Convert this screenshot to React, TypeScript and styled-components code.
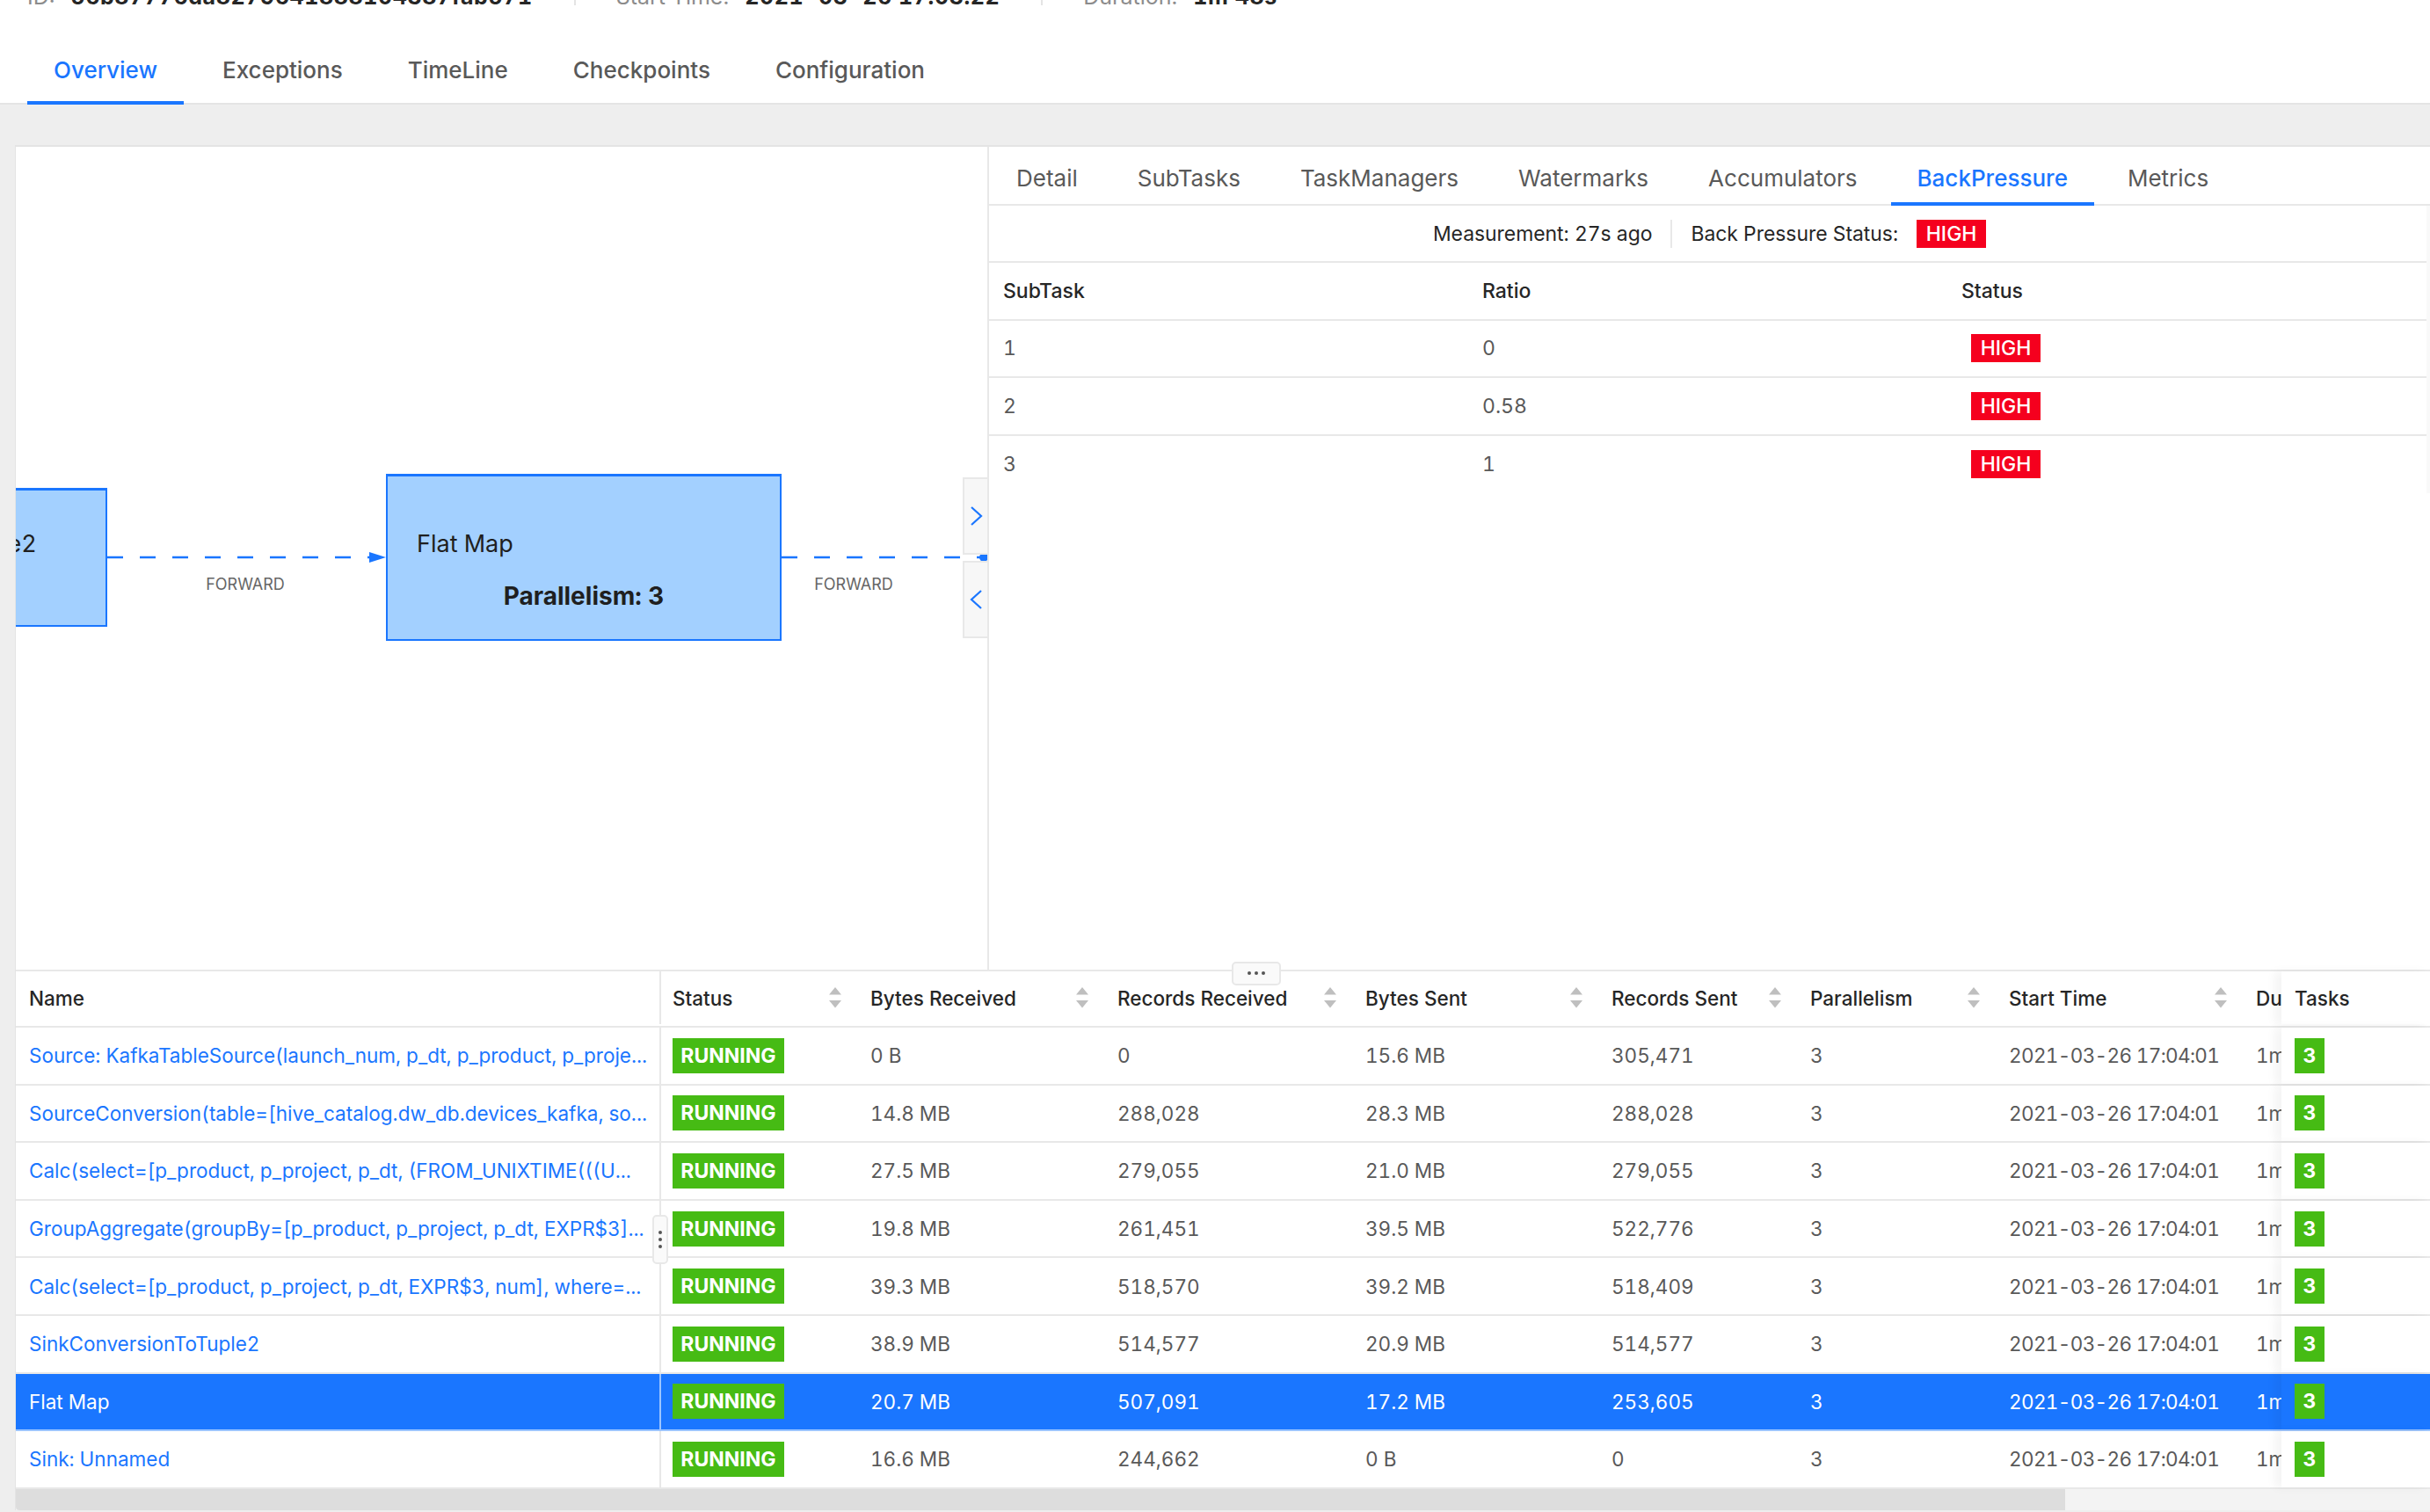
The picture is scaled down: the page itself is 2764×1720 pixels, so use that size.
import React from "react";
import styled, { createGlobalStyle } from "styled-components";

const Global = createGlobalStyle`
  html, body { margin: 0; padding: 0; background: #eeeeee; }
  * { box-sizing: border-box; }
  body {
    font-family: Inter, "Liberation Sans", sans-serif;
    font-feature-settings: "tnum";
    color: #595959;
  }
`;

const Page = styled.div`
  width: 2764px;
  height: 1720px;
  overflow: hidden;
  background: #eeeeee;
`;

const Header = styled.header`
  display: flow-root;
  height: 119px;
  background: #fff;
  border-bottom: 2px solid #e4e4e4;
`;

const Meta = styled.div`
  display: flex;
  align-items: flex-end;
  height: 20px;
  margin-top: -14px;
  padding-left: 31px;
  font-size: 25px;
  line-height: 20px;
  color: #8c8c8c;
`;

const MetaItem = styled.div`
  display: flex;
  gap: 18px;
  padding-right: 47px;
  margin-right: 46px;
  border-right: 2px solid #e4e4e4;
  &:last-child { border-right: 0; }
  b { color: #262626; font-weight: 700; font-size: 25px; letter-spacing: 0.6px; }
`;

const MainTabs = styled.nav`
  display: flex;
  gap: 14px;
  height: 87px;
  margin-top: 26px;
  padding-left: 31px;
`;

const MainTab = styled.div<{ $active?: boolean }>`
  padding: 31px 30px 0;
  font-size: 26px;
  line-height: 34px;
  font-weight: 500;
  color: ${(p) => (p.$active ? "#1a76ff" : "#595959")};
  border-bottom: 4px solid ${(p) => (p.$active ? "#1a76ff" : "transparent")};
`;

const Card = styled.main`
  position: relative;
  margin: 46px 0 0 17px;
  background: #fff;
  border-top: 2px solid #e4e4e4;
  border-left: 1px solid #e4e4e4;
`;

const TopArea = styled.section`
  display: flex;
  height: 936px;
`;

const Canvas = styled.div`
  position: relative;
  width: 1107px;
  flex: none;
  overflow: hidden;
  border-right: 2px solid #e8e8e8;
`;

const Edges = styled.svg`
  position: absolute;
  left: 0;
  top: 0;
`;

const Node = styled.div<{ $x: number; $y: number; $w: number; $h: number }>`
  position: absolute;
  left: ${(p) => p.$x}px;
  top: ${(p) => p.$y}px;
  width: ${(p) => p.$w}px;
  height: ${(p) => p.$h}px;
  background: #a3d0ff;
  border: 2px solid #1a76ff;
  border-top-width: 3px;
  color: #1f1f1f;
`;

const NodeName = styled.div<{ $top: number }>`
  position: absolute;
  left: 33px;
  top: ${(p) => p.$top}px;
  font-size: 27px;
  line-height: 36px;
  white-space: nowrap;
`;

const NodeParallel = styled.div`
  position: absolute;
  left: 0;
  right: 0;
  top: 118px;
  text-align: center;
  font-size: 28px;
  line-height: 36px;
  font-weight: 700;
`;

const EdgeLabel = styled.div<{ $cx: number }>`
  position: absolute;
  left: ${(p) => p.$cx - 60}px;
  top: 486px;
  width: 120px;
  text-align: center;
  font-size: 18px;
  line-height: 24px;
  color: #666;
`;

const ZoomGroup = styled.div`
  position: absolute;
  right: -2px;
  top: 376px;
  display: flex;
  flex-direction: column;
  gap: 7px;
`;

const ZoomButton = styled.div`
  display: flex;
  align-items: center;
  justify-content: center;
  width: 30px;
  height: 88px;
  background: #f7f7f7;
  border: 2px solid #e8e8e8;
  border-right: 0;
`;

const Detail = styled.section`
  flex: 1;
  min-width: 0;
`;

const SubTabs = styled.nav`
  display: flex;
  gap: 8px;
  height: 67px;
  padding-left: 1px;
  border-bottom: 2px solid #e8e8e8;
`;

const SubTab = styled.div<{ $active?: boolean }>`
  padding: 19px 30px 0;
  height: 67px;
  font-size: 26px;
  line-height: 34px;
  color: ${(p) => (p.$active ? "#1a76ff" : "#595959")};
  font-weight: ${(p) => (p.$active ? 500 : 400)};
  border-bottom: 4px solid ${(p) => (p.$active ? "#1a76ff" : "transparent")};
`;

const DetailBody = styled.div`
  display: flex;
  align-items: flex-start;
`;

const Scrollbar = styled.div`
  width: 4px;
  height: 327px;
  flex: none;
  background: #f9f9f9;
`;

const DetailContent = styled.div`
  flex: 1;
  min-width: 0;
`;

const Measure = styled.div`
  display: flex;
  align-items: center;
  justify-content: center;
  height: 65px;
  padding-left: 4px;
  font-size: 22.9px;
  color: #262626;
  border-bottom: 2px solid #e8e8e8;
`;

const MeasureText = styled.span`
  padding-right: 21px;
  margin-right: 21px;
  border-right: 2px solid #e8e8e8;
  line-height: 32px;
`;

const Tag = styled.span<{ $tone: "red" | "green"; $w: number }>`
  display: inline-flex;
  align-items: center;
  justify-content: center;
  width: ${(p) => p.$w}px;
  height: ${(p) => (p.$tone === "red" ? 32 : 40)}px;
  padding-top: 1px;
  background: ${(p) => (p.$tone === "red" ? "#f5001e" : "#46bb14")};
  color: #fff;
  font-size: 23px;
  font-weight: ${(p) => (p.$tone === "red" ? 500 : 700)};
  line-height: 1;
`;

const MeasureTag = styled(Tag)`
  margin-left: 21px;
`;

const RatioRow = styled.div<{ $head?: boolean; $last?: boolean }>`
  display: grid;
  grid-template-columns: 545px 545px 1fr;
  align-items: center;
  height: 65.5px;
  border-bottom: ${(p) => (p.$last ? "0" : "2px solid #e8e8e8")};
  font-size: 23px;
  color: ${(p) => (p.$head ? "#262626" : "#595959")};
  font-weight: ${(p) => (p.$head ? 500 : 400)};
  & > div { padding-left: 16px; }
`;

const StatusCell = styled.div`
  && { padding-left: 27px; }
  display: flex;
`;

const TableWrap = styled.section`
  position: relative;
  border-top: 2px solid #e8e8e8;
`;

const Row = styled.div<{ $selected?: boolean }>`
  display: grid;
  grid-template-columns: 734px 223px 281px 282px 280px 226px 226px 281px 44px 1fr;
  height: 65.6px;
  font-size: 22.5px;
  color: ${(p) => (p.$selected ? "#fff" : "#595959")};
  background: ${(p) => (p.$selected ? "#1a76ff" : "#fff")};
  border-bottom: 2px solid ${(p) => (p.$selected ? "#9cc5ff" : "#e8e8e8")};
`;

const HeadRow = styled(Row)`
  height: 64px;
  padding-bottom: 2px;
  color: #262626;
  font-weight: 500;
`;

const Cell = styled.div`
  position: relative;
  display: flex;
  align-items: center;
  justify-content: space-between;
  min-width: 0;
  padding: 0 15px;
  white-space: nowrap;
  overflow: hidden;
`;

const NameCell = styled(Cell)<{ $selected?: boolean }>`
  padding-left: 15px;
  border-right: 2px solid ${(p) => (p.$selected ? "#9cc5ff" : "#e8e8e8")};
  color: ${(p) => (p.$selected ? "#fff" : "#1a76ff")};
`;

const NameHead = styled(Cell)`
  padding-left: 15px;
  border-right: 2px solid #e8e8e8;
`;

const StateCell = styled(Cell)`
  padding-left: 13px;
`;

const DateCell = styled(Cell)`
  letter-spacing: -0.65px;
`;

const ClippedCell = styled(Cell)`
  padding-right: 0;
  justify-content: flex-start;
`;

const TasksCell = styled(Cell)<{ $selected?: boolean }>`
  overflow: visible;
  justify-content: flex-start;
  background: ${(p) => (p.$selected ? "#1a76ff" : "#fff")};
  box-shadow: -8px 0 10px rgba(0, 0, 0, 0.045);
`;

const Caret = styled.svg`
  width: 14px;
  height: 24px;
  flex: none;
  margin-right: 3px;
`;

const HScroll = styled.div`
  height: 24px;
  background: #f3f3f3;
`;

const HThumb = styled.div`
  width: 2331px;
  height: 100%;
  background: #dddddd;
  border-bottom-left-radius: 4px;
`;

const HandleH = styled.div`
  position: absolute;
  left: 1383px;
  top: -11px;
  z-index: 2;
  display: flex;
  align-items: center;
  justify-content: center;
  gap: 4px;
  width: 56px;
  height: 27px;
  padding-bottom: 2px;
  background: #fafafa;
  border: 2px solid #e8e8e8;
  border-radius: 5px;
`;

const HandleV = styled.div`
  position: absolute;
  left: 724px;
  top: 277px;
  z-index: 2;
  display: flex;
  flex-direction: column;
  align-items: center;
  justify-content: center;
  gap: 4px;
  width: 18px;
  height: 56px;
  background: #fafafa;
  border: 2px solid #e8e8e8;
  border-radius: 5px;
`;

const Dot = styled.i`
  display: block;
  width: 4px;
  height: 4px;
  border-radius: 50%;
  background: #555;
`;

const tabs = ["Overview", "Exceptions", "TimeLine", "Checkpoints", "Configuration"];
const subTabs = ["Detail", "SubTasks", "TaskManagers", "Watermarks", "Accumulators", "BackPressure", "Metrics"];
const ratios = [
  { id: 1, ratio: "0" },
  { id: 2, ratio: "0.58" },
  { id: 3, ratio: "1" },
];
const columns = ["Bytes Received", "Records Received", "Bytes Sent", "Records Sent", "Parallelism", "Start Time"];

const vertices = [
  { name: "Source: KafkaTableSource(launch_num, p_dt, p_product, p_proje...", br: "0 B", rr: "0", bs: "15.6 MB", rs: "305,471" },
  { name: "SourceConversion(table=[hive_catalog.dw_db.devices_kafka, so...", br: "14.8 MB", rr: "288,028", bs: "28.3 MB", rs: "288,028" },
  { name: "Calc(select=[p_product, p_project, p_dt, (FROM_UNIXTIME(((U...", br: "27.5 MB", rr: "279,055", bs: "21.0 MB", rs: "279,055" },
  { name: "GroupAggregate(groupBy=[p_product, p_project, p_dt, EXPR$3]...", br: "19.8 MB", rr: "261,451", bs: "39.5 MB", rs: "522,776" },
  { name: "Calc(select=[p_product, p_project, p_dt, EXPR$3, num], where=...", br: "39.3 MB", rr: "518,570", bs: "39.2 MB", rs: "518,409" },
  { name: "SinkConversionToTuple2", br: "38.9 MB", rr: "514,577", bs: "20.9 MB", rs: "514,577" },
  { name: "Flat Map", br: "20.7 MB", rr: "507,091", bs: "17.2 MB", rs: "253,605", selected: true },
  { name: "Sink: Unnamed", br: "16.6 MB", rr: "244,662", bs: "0 B", rs: "0" },
];

function SortCaret() {
  return (
    <Caret viewBox="0 0 14 24">
      <path d="M7 0 L14 8.5 L0 8.5 Z M0 15 L14 15 L7 23.5 Z" fill="#bfbfbf" />
    </Caret>
  );
}

function Chevron({ left }: { left?: boolean }) {
  return (
    <svg width="16" height="24" viewBox="0 0 16 24">
      <path d={left ? "M13 2 L2 12 L13 22" : "M2 2 L13 12 L2 22"} fill="none" stroke="#1a76ff" strokeWidth="2.2" />
    </svg>
  );
}

function App() {
  return (
    <Page>
      <Global />
      <Header>
        <Meta>
          <MetaItem>
            ID: <b>56b87776da8279641888104387fab571</b>
          </MetaItem>
          <MetaItem>
            Start Time: <b>2021-03-26 17:03:22</b>
          </MetaItem>
          <MetaItem>
            Duration: <b>1m 48s</b>
          </MetaItem>
        </Meta>
        <MainTabs>
          {tabs.map((t, i) => (
            <MainTab key={t} $active={i === 0}>
              {t}
            </MainTab>
          ))}
        </MainTabs>
      </Header>

      <Card>
        <TopArea>
          <Canvas>
            <Edges width="1107" height="936">
              <path d="M104 467 H403" stroke="#1a76ff" strokeWidth="2.5" strokeDasharray="18 19" fill="none" />
              <path d="M402 461 L421 467 L402 473 Z" fill="#1a76ff" />
              <path d="M871 467 H1100" stroke="#1a76ff" strokeWidth="2.5" strokeDasharray="18 19" fill="none" />
              <circle cx="1101" cy="467" r="5" fill="#1a76ff" />
            </Edges>
            <Node $x={-326} $y={388} $w={430} $h={158}>
              <NodeName $top={43}>SinkConversionToTuple2</NodeName>
            </Node>
            <Node $x={421} $y={372} $w={450} $h={190}>
              <NodeName $top={59}>Flat Map</NodeName>
              <NodeParallel>Parallelism: 3</NodeParallel>
            </Node>
            <EdgeLabel $cx={261}>FORWARD</EdgeLabel>
            <EdgeLabel $cx={953}>FORWARD</EdgeLabel>
            <ZoomGroup>
              <ZoomButton>
                <Chevron />
              </ZoomButton>
              <ZoomButton>
                <Chevron left />
              </ZoomButton>
            </ZoomGroup>
          </Canvas>

          <Detail>
            <SubTabs>
              {subTabs.map((t) => (
                <SubTab key={t} $active={t === "BackPressure"}>
                  {t}
                </SubTab>
              ))}
            </SubTabs>
            <DetailBody>
              <DetailContent>
                <Measure>
                  <MeasureText>Measurement: 27s ago</MeasureText>
                  Back Pressure Status:
                  <MeasureTag $tone="red" $w={79}>
                    HIGH
                  </MeasureTag>
                </Measure>
                <RatioRow $head>
                  <div>SubTask</div>
                  <div>Ratio</div>
                  <div>Status</div>
                </RatioRow>
                {ratios.map((r) => (
                  <RatioRow key={r.id} $last={r.id === 3}>
                    <div>{r.id}</div>
                    <div>{r.ratio}</div>
                    <StatusCell>
                      <Tag $tone="red" $w={79}>
                        HIGH
                      </Tag>
                    </StatusCell>
                  </RatioRow>
                ))}
              </DetailContent>
              <Scrollbar />
            </DetailBody>
          </Detail>
        </TopArea>

        <TableWrap>
          <HandleH>
            <Dot />
            <Dot />
            <Dot />
          </HandleH>
          <HandleV>
            <Dot />
            <Dot />
            <Dot />
          </HandleV>
          <HeadRow>
            <NameHead>Name</NameHead>
            <StateCell>
              Status
              <SortCaret />
            </StateCell>
            {columns.map((c) => (
              <Cell key={c}>
                {c}
                <SortCaret />
              </Cell>
            ))}
            <ClippedCell>Duration</ClippedCell>
            <TasksCell>Tasks</TasksCell>
          </HeadRow>
          {vertices.map((v) => (
            <Row key={v.name} $selected={v.selected}>
              <NameCell $selected={v.selected}>{v.name}</NameCell>
              <StateCell>
                <Tag $tone="green" $w={127}>
                  RUNNING
                </Tag>
              </StateCell>
              <Cell>{v.br}</Cell>
              <Cell>{v.rr}</Cell>
              <Cell>{v.bs}</Cell>
              <Cell>{v.rs}</Cell>
              <Cell>3</Cell>
              <DateCell>2021-03-26 17:04:01</DateCell>
              <ClippedCell>1m 48s</ClippedCell>
              <TasksCell $selected={v.selected}>
                <Tag $tone="green" $w={34}>
                  3
                </Tag>
              </TasksCell>
            </Row>
          ))}
          <HScroll>
            <HThumb />
          </HScroll>
        </TableWrap>
      </Card>
    </Page>
  );
}

export default App;
